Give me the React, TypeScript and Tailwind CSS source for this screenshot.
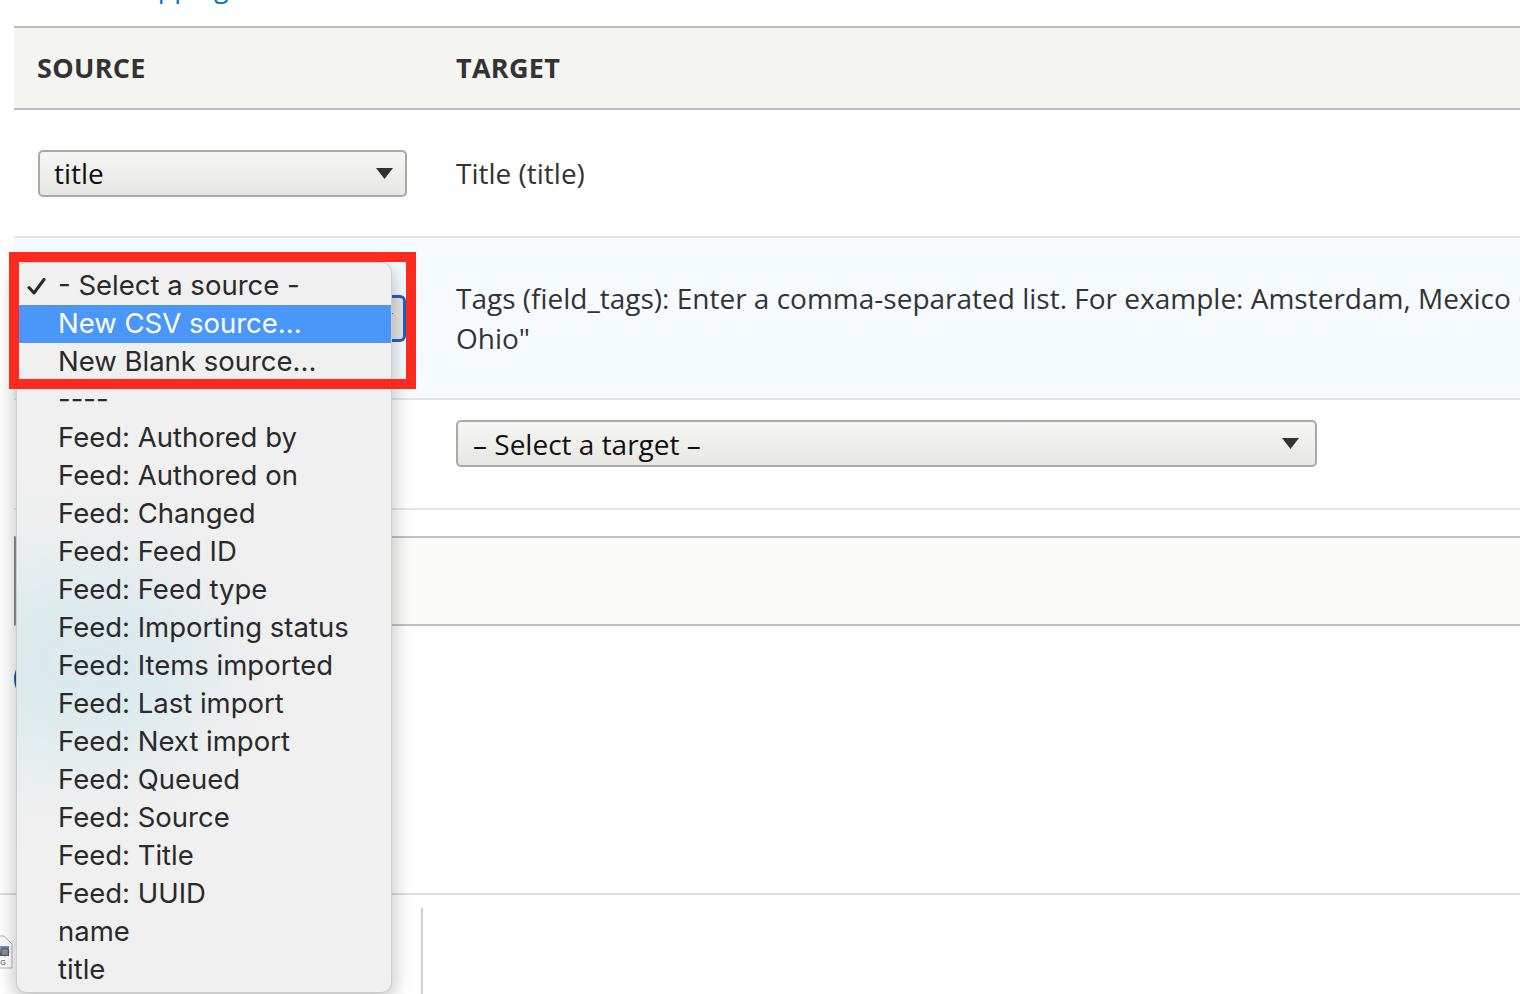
const sourceOptions = [
  '- Select a source -',
  'New CSV source...',
  'New Blank source...',
  '----',
  'Feed: Authored by',
  'Feed: Authored on',
  'Feed: Changed',
  'Feed: Feed ID',
  'Feed: Feed type',
  'Feed: Importing status',
  'Feed: Items imported',
  'Feed: Last import',
  'Feed: Next import',
  'Feed: Queued',
  'Feed: Source',
  'Feed: Title',
  'Feed: UUID',
  'name',
  'title',
];

const Arrow = () => (
  <svg width="17" height="11" viewBox="0 0 17 11" className="shrink-0">
    <path d="M0 0h17L8.5 11z" fill="#333" />
  </svg>
);

type SelectProps = {
  label: string;
  className?: string;
};

const Select = ({ label, className = '' }: SelectProps) => (
  <div
    className={`flex h-[47px] items-center justify-between rounded-[5px] border-2 border-[#a9a9a9] bg-linear-to-b from-[#f6f6f4] to-[#e7e7e3] pl-[14px] pr-[12px] text-[28px] text-[#111] ${className}`}
  >
    <span>{label}</span>
    <Arrow />
  </div>
);

const SourceMenu = () => (
  <div className="absolute left-[16px] top-[262px] h-[731px] w-[376px] overflow-hidden rounded-[10px] border border-black/15 bg-[#f0f0f0] pt-[4px] font-['Inter',sans-serif] text-[27.5px] text-[#2a2a2a] shadow-[0_6px_20px_rgba(0,0,0,0.28)]">
    <div className="pointer-events-none absolute left-[-60px] top-[300px] h-[200px] w-[260px] rounded-full bg-[#d3e8ec] opacity-70 blur-2xl" />
    {sourceOptions.map((item, i) => (
      <div
        key={item}
        className={`relative flex h-[38px] items-center pl-[41px] ${
          i === 1 ? 'bg-[#4a97f9] text-white' : ''
        }`}
      >
        {i === 0 && (
          <svg width="19" height="17" viewBox="0 0 19 17" className="absolute left-[10px] top-[11px]">
            <path d="M2 9.5l5 5.5L17 1.5" fill="none" stroke="#2a2a2a" strokeWidth="3" strokeLinecap="round" strokeLinejoin="round" />
          </svg>
        )}
        {item}
      </div>
    ))}
  </div>
);

const FileIcon = () => (
  <svg width="30" height="34" viewBox="0 0 30 34" className="shrink-0">
    <path d="M1 1h20l8 8v24H1z" fill="#fff" stroke="#b5b5b5" />
    <rect x="4" y="11" width="22" height="10" fill="#6a8fc4" />
    <path d="M4 19l7-5 6 4 9-3v6H4z" fill="#3a5e93" />
    <circle cx="22" cy="17" r="4" fill="#8a8a8a" stroke="#555" />
    <text x="15" y="30" fontSize="7" textAnchor="middle" fill="#333" fontFamily="Liberation Sans, sans-serif">PNG</text>
  </svg>
);

export default function App() {
  return (
    <div className="relative h-[994px] w-[1520px] overflow-hidden bg-white font-['Open_Sans',sans-serif] text-[#333]">
      <div className="flex h-[26px] flex-col">
        <div className="-mt-[32px] pl-[37px] text-[27px] leading-[37px] text-[#0074bd]">Feeds mapping</div>
      </div>

      <div className="ml-[14px] w-[1600px]">
        <div className="flex h-[84px] items-center border-y-2 border-[#c0c0c0] bg-[#f5f5f2] text-[27px] font-bold uppercase tracking-[0.3px]">
          <div className="w-[419px] shrink-0 pl-[23px]">Source</div>
          <div className="pl-[23px]">Target</div>
        </div>

        <div className="flex h-[128px] items-center border-b-2 border-[#e6e6e1] text-[28px]">
          <div className="w-[419px] shrink-0 pl-[24px]">
            <Select label="title" className="w-[369px]" />
          </div>
          <div className="pl-[23px]">Title (title)</div>
        </div>

        <div className="flex h-[162px] items-center border-b-2 border-[#e6e6e1] bg-[#f5fbfe] text-[28px]">
          <div className="w-[419px] shrink-0 pl-[24px]">
            <div className="flex h-[47px] w-[368px] items-center justify-end rounded-[6px] border-[3px] border-[#1c60cc] bg-[#e4e4e0] pr-[10px]">
              <Arrow />
            </div>
          </div>
          <div className="whitespace-nowrap pl-[23px] leading-[40px]">
            <div>Tags (field_tags): Enter a comma-separated list. For example: Amsterdam, Mexico City, "Cleveland,</div>
            <div>Ohio"</div>
          </div>
        </div>

        <div className="flex h-[110px] items-start border-b-2 border-[#e6e6e1] pt-[20px]">
          <div className="w-[419px] shrink-0" />
          <div className="pl-[23px]">
            <Select label="– Select a target –" className="w-[861px] pl-[15px] pr-[16px]" />
          </div>
        </div>

        <div className="mt-[26px] h-[90px] border-y-2 border-l-2 border-[#c0c0c0] border-l-[#8f8f8f] bg-[#fafaf9]" />

        <div className="mt-[31px] h-[44px] w-[160px] rounded-full bg-[#0d5ca6]" />
      </div>

      <div className="mt-[192px] border-t-2 border-[#dedede]">
        <div className="flex pt-[13px]">
          <div className="w-[421px] shrink-0 pt-[27px]">
            <div className="-ml-[17px]">
              <FileIcon />
            </div>
          </div>
          <div className="h-[100px] border-l-2 border-[#d2d2d2]" />
        </div>
      </div>

      <SourceMenu />
      <div className="absolute left-[9px] top-[252px] h-[137px] w-[407px] border-[10px] border-[#fd2a1f]" />
    </div>
  );
}
